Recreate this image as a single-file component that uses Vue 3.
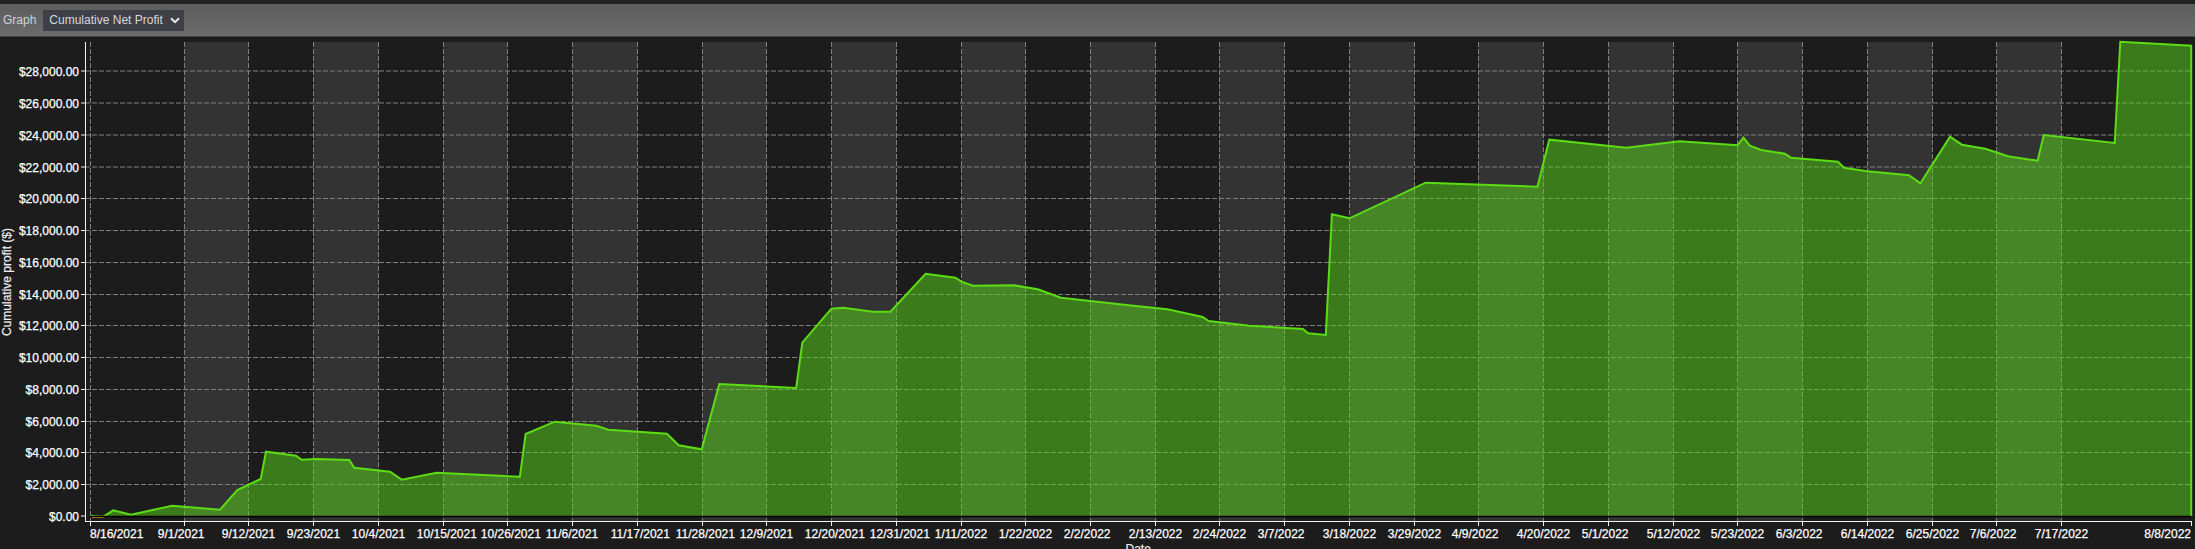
<script setup>
const ticks = [
  [90.5, '8/16/2021'], [184.5, '9/1/2021'], [248.5, '9/12/2021'], [313.5, '9/23/2021'],
  [378.5, '10/4/2021'], [443.5, '10/15/2021'], [507.5, '10/26/2021'], [572.5, '11/6/2021'],
  [637.5, '11/17/2021'], [702.5, '11/28/2021'], [766.5, '12/9/2021'], [831.5, '12/20/2021'],
  [896.5, '12/31/2021'], [961.5, '1/11/2022'], [1025.5, '1/22/2022'], [1090.5, '2/2/2022'],
  [1155.5, '2/13/2022'], [1219.5, '2/24/2022'], [1284.5, '3/7/2022'], [1349.5, '3/18/2022'],
  [1414.5, '3/29/2022'], [1478.5, '4/9/2022'], [1543.5, '4/20/2022'], [1608.5, '5/1/2022'],
  [1673.5, '5/12/2022'], [1737.5, '5/23/2022'], [1802.5, '6/3/2022'], [1867.5, '6/14/2022'],
  [1932.5, '6/25/2022'], [1996.5, '7/6/2022'], [2061.5, '7/17/2022'],
].map(([x, label]) => ({ x, label }))

// first label sits right of its tick, the rest start 26.7px left of it
const labels = ticks.map((t, i) => ({ ...t, left: i === 0 ? 90 : t.x - 26.7 }))

// every other period gets the lighter band
const bands = []
for (let i = 1; i + 1 < ticks.length; i += 2) {
  bands.push({ x: ticks[i].x, width: ticks[i + 1].x - ticks[i].x })
}

const yRows = [
  [71, '$28,000.00'], [103, '$26,000.00'], [135, '$24,000.00'], [167, '$22,000.00'],
  [198.5, '$20,000.00'], [230.5, '$18,000.00'], [262.5, '$16,000.00'], [294.5, '$14,000.00'],
  [325.5, '$12,000.00'], [357.5, '$10,000.00'], [389.5, '$8,000.00'], [421.5, '$6,000.00'],
  [452.5, '$4,000.00'], [484.5, '$2,000.00'], [516, '$0.00'],
].map(([y, label]) => ({ y, label }))

const profit = [
  [90, 515.7], [103.3, 516.7], [113.3, 510.3], [131, 514.7], [172.3, 505.7], [220, 509.7],
  [237.3, 490], [260.7, 479], [266, 451.7], [296, 455.7], [301.7, 459.7], [316.7, 459],
  [349.3, 460], [354.3, 467.7], [390, 471.7], [401.7, 479.7], [436.7, 472.7], [519.9, 476.7],
  [525.6, 434], [554.7, 421.7], [596.4, 425.7], [608.3, 429.7], [666.9, 433.7], [678.7, 445.3],
  [701.7, 449.3], [719.3, 384], [796.2, 388], [802.3, 342.7], [831.4, 308.7], [843.3, 307.7],
  [872.8, 311.7], [890.4, 311.7], [925.6, 273.7], [955.4, 277.7], [961.5, 281.7], [973, 285.7],
  [1014, 285.3], [1037.7, 289.3], [1061, 297.7], [1128.7, 305.3], [1167.4, 309.3], [1202.6, 317],
  [1208.7, 321], [1249.3, 325.7], [1302.8, 329], [1308.2, 333.3], [1325.8, 335], [1331.9, 214.3],
  [1349.5, 218.3], [1425.7, 182.7], [1537.4, 186.7], [1549.3, 139.7], [1626.2, 147.7], [1679.6, 141.2],
  [1737.6, 145.3], [1743.5, 137.7], [1749.8, 145.7], [1761.2, 150], [1784.9, 153.7], [1790.8, 157.7],
  [1838, 161.7], [1844, 167.7], [1867.2, 171.3], [1909, 175.3], [1920.4, 183.3], [1950, 136.7],
  [1961.8, 144.7], [1985.4, 148.7], [2008, 156.3], [2037.6, 160.7], [2043.8, 135], [2114.7, 143],
  [2120.3, 41.7], [2191.2, 45.7],
]

const linePoints = profit.map((p) => p.join(',')).join(' ') + ' 2191.2,516'
const areaPoints = linePoints + ' 90,516'
</script>

<template>
  <div class="page">
    <div class="toolbar">
      <label class="graph-label" for="graph-type">Graph</label>
      <div class="select-wrap">
        <select id="graph-type" class="graph-select">
          <option>Cumulative Net Profit</option>
        </select>
        <svg class="chevron" width="10" height="7" viewBox="0 0 10 7">
          <path d="M1 1.2 L5 5.2 L9 1.2" />
        </svg>
      </div>
    </div>

    <svg class="chart" width="2195" height="512" viewBox="0 37 2195 512">
      <rect v-for="b in bands" :key="b.x" class="band" :x="b.x" y="42" :width="b.width" height="479" />

      <line v-for="r in yRows.slice(0, -1)" :key="r.y" class="grid" x1="85" :y1="r.y" x2="2191" :y2="r.y" />
      <line v-for="t in ticks" :key="t.x" class="grid" :x1="t.x" y1="42" :x2="t.x" y2="521" />

      <polygon class="area" :points="areaPoints" />
      <polyline class="profit" :points="linePoints" />
      <line class="zero" x1="90" y1="516.5" x2="2191" y2="516.5" />
      <line class="drawdown" x1="92" y1="517.5" x2="103" y2="517.5" />

      <line class="axis" x1="85.5" y1="42" x2="85.5" y2="522" />
      <line class="axis" x1="85" y1="521.5" x2="2192" y2="521.5" />

      <g v-for="r in yRows" :key="r.label">
        <line class="axis" x1="81" :y1="r.y" x2="85" :y2="r.y" />
        <text class="tick-text" x="79" :y="r.y + 4.5" text-anchor="end">{{ r.label }}</text>
      </g>

      <line v-for="t in ticks" :key="'tick' + t.x" class="axis" :x1="t.x" y1="522" :x2="t.x" y2="526" />
      <line class="axis" x1="2191.5" y1="522" x2="2191.5" y2="526" />
      <text v-for="t in labels" :key="t.label" class="tick-text" :x="t.left" y="538">{{ t.label }}</text>
      <text class="tick-text" x="2191" y="538" text-anchor="end">8/8/2022</text>

      <text class="axis-title" transform="translate(11 282) rotate(-90)" text-anchor="middle">Cumulative profit ($)</text>
      <text class="axis-title" x="1125.5" y="553">Date</text>
    </svg>
  </div>
</template>

<style scoped>
.page {
  width: 2195px;
  height: 549px;
  overflow: hidden;
  background: #1c1c1c;
  font-family: "Liberation Sans", Arial, sans-serif;
}

.toolbar {
  display: flex;
  align-items: center;
  gap: 7px;
  box-sizing: border-box;
  height: 37px;
  padding: 0 0 0 3px;
  border-top: 4px solid #222;
  border-bottom: 1px solid #444;
  background: linear-gradient(#5d5d5d, #6b6b6b);
}

.graph-label {
  color: #d2d2d8;
  font-size: 12px;
}

.select-wrap {
  position: relative;
  display: flex;
}

.graph-select {
  appearance: none;
  box-sizing: border-box;
  width: 141px;
  height: 21px;
  padding: 0 0 0 6px;
  border: none;
  border-radius: 0;
  background-color: #3f3f47;
  color: #d8d8de;
  font-family: inherit;
  font-size: 12px;
}

.chevron {
  position: absolute;
  top: 7px;
  right: 4px;
  pointer-events: none;
}

.chevron path {
  fill: none;
  stroke: #e8e8e8;
  stroke-width: 2;
}

.chart {
  display: block;
}

.band {
  fill: #333;
}

.grid {
  stroke: #808080;
  stroke-width: 1;
  stroke-dasharray: 5 2;
}

.area {
  fill: rgb(91, 211, 26);
  fill-opacity: 0.52;
}

.profit {
  fill: none;
  stroke: #5cdc14;
  stroke-width: 2;
}

.zero {
  stroke: #000;
  stroke-width: 1.5;
}

.drawdown {
  stroke: #a86a1a;
  stroke-width: 1;
}

.axis {
  stroke: #f2f2f2;
  stroke-width: 1;
}

.tick-text {
  fill: #fff;
  stroke: #fff;
  stroke-width: 0.25;
  font-size: 12px;
}

.axis-title {
  fill: #eee;
  stroke: #eee;
  stroke-width: 0.2;
  font-size: 12px;
}
</style>

<style>
html,
body {
  background: #1c1c1c;
  overflow: hidden;
}
</style>
